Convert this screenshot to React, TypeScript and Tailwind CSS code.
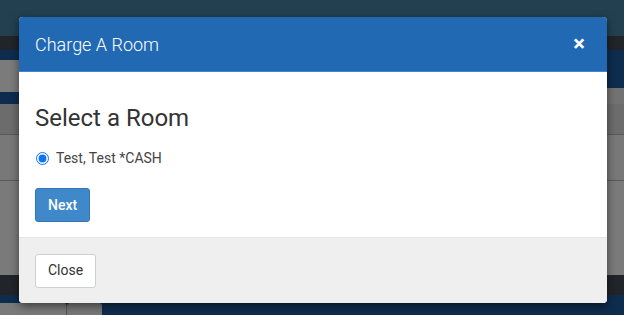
export default function App() {
  return (
    <div className="relative h-[315px] w-[624px] overflow-hidden font-['Roboto',sans-serif]">
      {/* page behind the modal, already dimmed */}
      <div className="flex h-full flex-col">
        <div className="h-[36px] bg-[#22404f]" />
        <div className="h-[14px] bg-[#212428]" />
        <div className="flex h-[42px]">
          <div className="flex w-[312px] flex-col">
            <div className="h-[10px] bg-[#0e2c4e]" />
            <div className="flex-1 bg-[#7b7b7b]" />
          </div>
          <div className="flex flex-1 flex-col">
            <div className="h-[38px] bg-[#0e2c4e]" />
            <div className="flex-1 bg-[#727272]" />
          </div>
        </div>
        <div className="flex h-[12px]">
          <div className="w-[312px] bg-[#0e2c4e]" />
          <div className="flex-1 bg-[#727272]" />
        </div>
        <div className="h-[31px] border-b border-[#5a5a5a] bg-[#6c6c6c]" />
        <div className="h-[46px] border-b border-[#5a5a5a] bg-[#787878]" />
        <div className="flex-1 bg-[#7a7a7a]" />
        <div className="h-[20px] bg-[#212428]" />
        <div className="h-[8px] bg-[#0e2c4e]" />
        <div className="flex h-[12px] bg-[#0e2c4e]">
          <div className="w-[67px] rounded-tr-[3px] border-r border-[#555] bg-[#7a7a7a]" />
          <div className="w-[35px] rounded-t-[3px] bg-[#777]" />
        </div>
      </div>

      {/* modal */}
      <div className="absolute left-[19px] top-[17px] flex h-[286px] w-[588px] flex-col overflow-hidden rounded-[4px] bg-white shadow-[0_3px_9px_rgba(0,0,0,0.5)]">
        <div className="flex h-[55px] items-center justify-between border-b border-[#3d86cc] bg-[#2169b3] pl-[16px] pr-[22px]">
          <h4 className="text-[18px] font-light text-white">Charge A Room</h4>
          <span className="text-[22px] font-bold leading-none text-white">×</span>
        </div>
        <div className="flex-1 px-[16px] pt-[33px]">
          <h3 className="text-[24px] font-normal leading-[1.1] text-[#333]">Select a Room</h3>
          <label className="mt-[17px] flex items-center gap-[7px] text-[14px] text-[#444]">
            <input type="radio" defaultChecked className="ml-[1px] h-[13px] w-[13px] accent-[#0b75f5]" />
            Test, Test *CASH
          </label>
          <button className="mt-[19px] h-[34px] rounded-[3px] border border-[#3576b6] bg-[#3f89ca] px-[12px] text-[14px] font-medium text-white">
            Next
          </button>
        </div>
        <div className="flex h-[66px] items-center border-t border-[#e5e5e5] bg-[#efefef] px-[16px]">
          <button className="h-[34px] rounded-[3px] border border-[#cfcfcf] bg-white px-[12px] text-[14px] text-[#333]">
            Close
          </button>
        </div>
      </div>
    </div>
  )
}
